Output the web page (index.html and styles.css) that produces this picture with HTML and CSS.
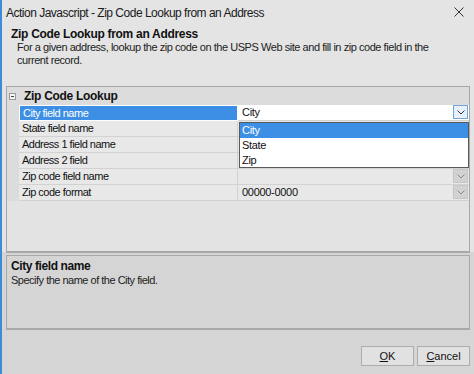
FILE: index.html
```html
<!DOCTYPE html>
<html lang="en">
<head>
    <meta charset="UTF-8">
    <title>Action Javascript - Zip Code Lookup from an Address</title>
    <link rel="stylesheet" href="styles.css">
</head>
<body>
    <div class="window">
        <div class="titlebar">
            <span class="title">Action Javascript - Zip Code Lookup from an Address</span>
            <svg class="close" width="10" height="10" viewBox="0 0 10 10">
                <path d="M0.5 0.5 L9.5 9.5 M9.5 0.5 L0.5 9.5" stroke="#333" stroke-width="1" fill="none"/>
            </svg>
        </div>
        <div class="header">
            <div class="headTitle">Zip Code Lookup from an Address</div>
            <div class="headDesc">For a given address, lookup the zip code on the USPS Web site and fill in zip code field in the<br>current record.</div>
        </div>

        <div class="grid">
            <div class="group">
                <span class="toggle"></span>
                <span class="groupName">Zip Code Lookup</span>
            </div>
            <div class="row selected">
                <div class="name">City field name</div>
                <div class="value editing">
                    <span>City</span>
                    <span class="drop active">
                        <svg width="8" height="5" viewBox="0 0 8 5"><path d="M0.5 0.5 L4 4 L7.5 0.5" stroke="#333" fill="none"/></svg>
                    </span>
                </div>
            </div>
            <div class="row">
                <div class="name">State field name</div>
                <div class="value"></div>
            </div>
            <div class="row">
                <div class="name">Address 1 field name</div>
                <div class="value"></div>
            </div>
            <div class="row">
                <div class="name">Address 2 field</div>
                <div class="value"></div>
            </div>
            <div class="row">
                <div class="name">Zip code field name</div>
                <div class="value">
                    <span></span>
                    <span class="drop">
                        <svg width="8" height="5" viewBox="0 0 8 5"><path d="M0.5 0.5 L4 4 L7.5 0.5" stroke="#8a8a8a" fill="none"/></svg>
                    </span>
                </div>
            </div>
            <div class="row">
                <div class="name">Zip code format</div>
                <div class="value">
                    <span>00000-0000</span>
                    <span class="drop">
                        <svg width="8" height="5" viewBox="0 0 8 5"><path d="M0.5 0.5 L4 4 L7.5 0.5" stroke="#8a8a8a" fill="none"/></svg>
                    </span>
                </div>
            </div>

            <div class="dropdown">
                <div class="option picked">City</div>
                <div class="option">State</div>
                <div class="option">Zip</div>
            </div>
        </div>

        <div class="help">
            <div class="helpTitle">City field name</div>
            <div class="helpText">Specify the name of the City field.</div>
        </div>

        <div class="footer">
            <button class="btn"><u>O</u>K</button>
            <button class="btn"><u>C</u>ancel</button>
        </div>
    </div>
</body>
</html>
```

FILE: styles.css
```css
html, body {
    margin: 0;
    padding: 0;
}
body {
    width: 474px;
    height: 374px;
    overflow: hidden;
    font-family: "Liberation Sans", Arial, sans-serif;
    font-size: 11px;
    color: #111;
}
.window {
    height: 374px;
    border-left: 2px solid #3c8ad8;
    background: linear-gradient(#e4e4e4 0, #e4e4e4 252px, #d5d5d5 252px);
}
.titlebar {
    height: 26px;
    display: flex;
    align-items: center;
    justify-content: space-between;
    padding: 0 10px 0 4px;
}
.title {
    font-size: 12px;
    letter-spacing: -0.5px;
    color: #1a1a1a;
}
.close {
    margin-top: -2px;
}
.header {
    height: 60px;
    box-sizing: border-box;
    padding: 1px 0 0 9px;
}
.headTitle {
    font-weight: bold;
    font-size: 12px;
    line-height: 14px;
    letter-spacing: -0.3px;
}
.headDesc {
    padding-left: 6px;
    line-height: 13px;
    letter-spacing: -0.45px;
    color: #222;
}

/* property grid */
.grid {
    position: relative;
    margin-left: 4px;
    width: 464px;
    height: 167px;
    box-sizing: border-box;
    border: 1px solid #a8a8a8;
    border-bottom-width: 2px;
    background: #e3e3e3;
}
.group {
    height: 18px;
    display: flex;
    align-items: center;
    background: #dcdcdc;
}
.toggle {
    width: 5px;
    height: 5px;
    margin: 1px 0 0 2px;
    border: 1px solid #9a9a9a;
    background: #f4f4f4;
    position: relative;
}
.toggle::after {
    content: "";
    position: absolute;
    left: 1px;
    top: 2px;
    width: 3px;
    height: 1px;
    background: #444;
}
.groupName {
    margin-left: 8px;
    font-weight: bold;
    font-size: 12px;
    letter-spacing: -0.3px;
}
.row {
    height: 16px;
    display: flex;
    padding-left: 12px;
    background: #dcdcdc;
}
.row > div {
    box-sizing: border-box;
    height: 16px;
    line-height: 15px;
    border-bottom: 1px solid #d2d2d2;
    background: #e8e8e8;
}
.name {
    width: 219px;
    padding-left: 3px;
    letter-spacing: -0.5px;
    border-right: 1px solid #d2d2d2;
}
.value {
    flex: 1;
    display: flex;
    justify-content: space-between;
    padding-left: 4px;
    letter-spacing: -0.3px;
}
.row.selected .name {
    background: #3c8fe4;
    color: #fff;
    border: 1px solid #fff;
    border-right-color: #fff;
}
.row.selected .value {
    background: #fff;
}
.drop {
    width: 15px;
    height: 14px;
    margin: 0 1px 0 0;
    box-sizing: border-box;
    display: flex;
    align-items: center;
    justify-content: center;
    background: #d2d2d2;
    border: 1px solid #c6c6c6;
}
.drop.active {
    background: #e8f1fb;
    border-color: #6fa6dc;
}
.dropdown {
    position: absolute;
    left: 232px;
    top: 35px;
    width: 230px;
    height: 46px;
    box-sizing: border-box;
    border: 1px solid #595959;
    background: #fff;
}
.option {
    height: 15px;
    line-height: 15px;
    padding-left: 2px;
    letter-spacing: -0.3px;
}
.option.picked {
    background: #3c8fe4;
    color: #fff;
}

/* help panel */
.help {
    margin: 2px 0 0 4px;
    width: 464px;
    height: 75px;
    box-sizing: border-box;
    border: 1px solid #a8a8a8;
    border-bottom-width: 2px;
    padding: 3px 0 0 4px;
}
.helpTitle {
    font-weight: bold;
    font-size: 12px;
    line-height: 14px;
    letter-spacing: -0.4px;
}
.helpText {
    margin-top: 0;
    line-height: 14px;
    letter-spacing: -0.5px;
    color: #222;
}
.footer {
    display: flex;
    justify-content: flex-end;
    gap: 3px;
    padding: 16px 4px 0 0;
}
.btn {
    width: 53px;
    height: 20px;
    padding: 0;
    border: 1px solid #adadad;
    background: #e1e1e1;
    font-family: "Liberation Sans", Arial, sans-serif;
    font-size: 11px;
    color: #111;
}
```
